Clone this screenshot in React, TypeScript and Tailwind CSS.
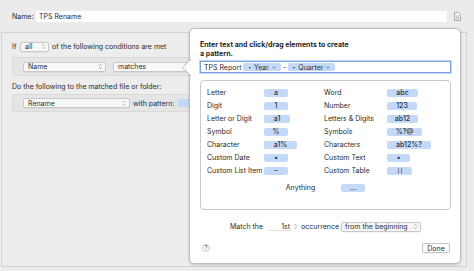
import React from "react";

function Stepper({ className = "" }: { className?: string }) {
  return (
    <svg width="5" height="7" viewBox="0 0 5 7" className={className}>
      <path
        d="M1.2 2.7 L2.5 1.3 L3.8 2.7 M1.2 4.3 L2.5 5.7 L3.8 4.3"
        fill="none"
        stroke="#8a8a8a"
        strokeWidth="0.7"
      />
    </svg>
  );
}

function Popup({ label, className = "" }: { label: string; className?: string }) {
  return (
    <div
      className={`flex items-center justify-between h-[10px] pl-[4px] pr-[2px] rounded-[2px] bg-[#f8f8f8] border border-[#c8c8c8] shadow-[0_0.5px_0.5px_rgba(0,0,0,0.08)] ${className}`}
    >
      <span className="whitespace-nowrap">{label}</span>
      <Stepper />
    </div>
  );
}

function Token({ label, className = "" }: { label: React.ReactNode; className?: string }) {
  return (
    <span
      className={`flex items-center justify-center h-[8px] rounded-[2px] bg-[#c3d9f7] text-[#2a3444] text-[7px] font-medium ${className}`}
    >
      {label}
    </span>
  );
}

function FieldToken({ label, className = "" }: { label: string; className?: string }) {
  return (
    <span
      className={`flex items-center justify-center gap-[3px] h-[8px] rounded-[2px] bg-[#c3d9f7] text-[#2a3444] ${className}`}
    >
      <span className="text-[5px]">•</span>
      <span>{label}</span>
      <svg width="4" height="3" viewBox="0 0 4 3">
        <path d="M0.6 0.7 L2 2.2 L3.4 0.7" fill="none" stroke="#4a5a70" strokeWidth="0.7" />
      </svg>
    </span>
  );
}

function DocIcon() {
  return (
    <svg width="7" height="9" viewBox="0 0 7 9" className="ml-[7px]">
      <path d="M0.5 0.5 H4.5 L6.5 2.5 V8.5 H0.5 Z" fill="#f4f4f4" stroke="#8c8c8c" strokeWidth="0.7" />
      <path d="M1.8 4 H5.2 M1.8 5.5 H5.2 M1.8 7 H5.2" stroke="#9a9a9a" strokeWidth="0.6" />
    </svg>
  );
}

// small "table" mark used by the Custom Table token
const TableMark = (
  <svg width="6" height="6" viewBox="0 0 6 6">
    <path d="M1.5 0.5 V5.5 M4.5 0.5 V5.5" stroke="#3a4658" strokeWidth="1.1" strokeDasharray="1.1 0.6" />
  </svg>
);

const leftRows: [string, React.ReactNode, string][] = [
  ["Letter", "a", "w-[24px]"],
  ["Digit", "1", "w-[24px]"],
  ["Letter or Digit", "a1", "w-[26px]"],
  ["Symbol", "%", "w-[24px]"],
  ["Character", "a1%", "w-[33px]"],
  ["Custom Date", "•", "w-[24px]"],
  ["Custom List Item", "–", "w-[24px]"],
];

const rightRows: [string, React.ReactNode, string][] = [
  ["Word", "abc", "w-[31px]"],
  ["Number", "123", "w-[30px]"],
  ["Letters & Digits", "ab12", "w-[31px]"],
  ["Symbols", "%?@", "w-[35px]"],
  ["Characters", "ab12%?", "w-[44px]"],
  ["Custom Text", "•", "w-[23px]"],
  ["Custom Table", TableMark, "w-[25px]"],
];

function Popover() {
  return (
    <div className="absolute left-[189px] top-[28px] w-[272px] h-[236px] bg-white border border-[#bcbcbc] rounded-[5px] shadow-[0_1px_3px_rgba(0,0,0,0.18)] pl-[10px] pr-[9px] pt-[11px] flex flex-col">
      <svg width="10" height="17" viewBox="0 0 10 17" className="absolute left-[-9px] top-[30px]">
        <path d="M10 0 L1.5 8.5 L10 17" fill="#ffffff" stroke="#bcbcbc" strokeWidth="1" />
      </svg>

      <div className="font-bold leading-[9px] text-[#1f1f1f]">
        Enter text and click/drag elements to create
        <br />
        a pattern.
      </div>

      <div className="mt-[3px] h-[12px] border border-[#7fa3e4] shadow-[0_0_0_1px_#c4d5f3] flex items-center pl-[3px]">
        <span className="w-[39px]">TPS Report</span>
        <FieldToken label="Year" className="w-[38px]" />
        <span className="w-[7px] text-center">-</span>
        <FieldToken label="Quarter" className="w-[47px]" />
      </div>

      <div className="mt-[7px] h-[130px] border border-[#c9c9c9] rounded-[4px] pl-[6px] pt-[5px]">
        <div className="grid grid-cols-[57px_60px_63px_1fr]">
          {leftRows.map((l, i) => {
            const r = rightRows[i];
            return (
              <React.Fragment key={l[0]}>
                <div className="h-[13px] flex items-center">{l[0]}</div>
                <div className="h-[13px] flex items-center">
                  <Token label={l[1]} className={l[2]} />
                </div>
                <div className="h-[13px] flex items-center">{r[0]}</div>
                <div className="h-[13px] flex items-center">
                  <Token label={r[1]} className={r[2]} />
                </div>
              </React.Fragment>
            );
          })}
        </div>
        <div className="mt-[4px] h-[13px] flex items-center justify-center gap-[26px] pr-[6px]">
          <span>Anything</span>
          <Token label="…" className="w-[24px]" />
        </div>
      </div>

      <div className="mt-[12px] h-[9px] flex items-center justify-center">
        <span>Match the</span>
        <div className="ml-[5px] w-[24px] h-[9px] flex items-center justify-end pr-[2px] border-b border-[#e2e2e2]">
          1st
        </div>
        <Stepper className="ml-[1px]" />
        <span className="ml-[3px]">occurrence</span>
        <Popup label="from the beginning" className="ml-[2px] w-[80px] !pl-[3px]" />
      </div>

      <div className="mt-[12px] h-[10px] flex items-center justify-between pl-[2px] pr-[1px]">
        <div className="w-[8px] h-[8px] rounded-full border border-[#c8c8c8] bg-white flex items-center justify-center text-[6px] text-[#555]">
          ?
        </div>
        <div className="w-[28px] h-[10px] rounded-[2px] border border-[#c4c4c4] bg-white shadow-[0_0.5px_0.5px_rgba(0,0,0,0.1)] flex items-center justify-center">
          Done
        </div>
      </div>
    </div>
  );
}

export default function App() {
  return (
    <div className="relative w-[474px] h-[271px] overflow-hidden bg-[#ececec] font-['Inter','Liberation_Sans',sans-serif] text-[7px] leading-none text-[#2a2a2a]">
      <header className="h-[32px] flex items-center pl-[12px] pr-[13px] bg-[#ebebeb]">
        <span className="w-[24px]">Name:</span>
        <div className="flex-1 h-[11px] bg-white flex items-center pl-[3px]">TPS Rename</div>
        <DocIcon />
      </header>

      <div className="ml-[1px] w-[466px] h-[235px] border border-[#d3d3d3] bg-[#ededed] px-[10px] pt-[9px]">
        <div className="h-[9px] flex items-center">
          <span className="w-[8px]">If</span>
          <Popup label="all" className="w-[29px]" />
          <span className="ml-[3px]">of the following conditions are met</span>
        </div>

        <div className="mt-[6px] h-[19px] w-[445px] rounded-[2px] border border-[#dadada] bg-[#e5e5e5] flex items-center pl-[10px]">
          <Popup label="Name" className="w-[83px]" />
          <Popup label="matches" className="ml-[7px] w-[80px]" />
        </div>

        <div className="mt-[6px] h-[9px] flex items-center">Do the following to the matched file or folder:</div>

        <div className="mt-[3px] h-[18px] w-[445px] rounded-[2px] border border-[#dadada] bg-[#e5e5e5] flex items-center pl-[10px]">
          <Popup label="Rename" className="w-[107px]" />
          <span className="ml-[3px]">with pattern:</span>
          <span className="ml-[4px] w-[20px] h-[8px] rounded-[2px] bg-[#c3d9f7]" />
        </div>
      </div>

      <Popover />
    </div>
  );
}
